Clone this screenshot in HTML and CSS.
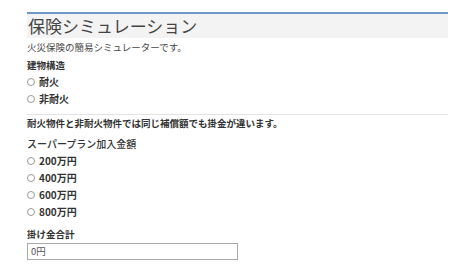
FILE: index.html
```html
<!DOCTYPE html>
<html lang="ja">
<head>
<meta charset="utf-8">
<link rel="stylesheet" href="styles.css">
</head>
<body>
<div class="page">
  <h1 class="title">保険シミュレーション</h1>
  <p class="lead">火災保険の簡易シミュレーターです。</p>
  <div class="label first">建物構造</div>
  <label class="opt"><span class="radio"></span>耐火</label>
  <label class="opt"><span class="radio"></span>非耐火</label>
  <div class="rule"></div>
  <p class="note">耐火物件と非耐火物件では同じ補償額でも掛金が違います。</p>
  <div class="label medium">スーパープラン加入金額</div>
  <label class="opt"><span class="radio"></span>200万円</label>
  <label class="opt"><span class="radio"></span>400万円</label>
  <label class="opt"><span class="radio"></span>600万円</label>
  <label class="opt"><span class="radio"></span>800万円</label>
  <div class="label total">掛け金合計</div>
  <div class="field">0円</div>
</div>
</body>
</html>
```
FILE: styles.css
```css
html, body {
  margin: 0;
  padding: 0;
  background: #fff;
}
body {
  font-family: "Noto Sans CJK JP", "Noto Sans", sans-serif;
  color: #333;
}
.page {
  width: 421px;
  margin-left: 27px;
  padding-top: 12px;
}
.title {
  margin: 0;
  border-top: 2px solid #6d98c3;
  background: #f3f3f3;
  font-size: 17px;
  font-weight: normal;
  color: #444;
  height: 24px;
  line-height: 24px;
  padding-left: 1px;
}
.lead {
  margin: 2px 0 0 0;
  font-size: 9.5px;
  line-height: 14px;
  color: #444;
}
.label {
  font-size: 9.5px;
  font-weight: bold;
  line-height: 16px;
  color: #333;
}
.label.first {
  margin-top: 3px;
}
.opt {
  display: flex;
  align-items: center;
  height: 17px;
  font-size: 10px;
  font-weight: bold;
  color: #333;
}
.radio {
  width: 6px;
  height: 6px;
  border: 1px solid #999;
  border-radius: 50%;
  margin-right: 4px;
  flex: none;
}
.rule {
  margin-top: 7px;
  height: 1px;
  background: #e3e3e3;
}
.note {
  margin: 1px 0 0 0;
  font-size: 9.5px;
  font-weight: bold;
  line-height: 14px;
  color: #333;
}
.label.medium {
  margin-top: 6px;
  font-size: 10px;
  font-weight: 500;
}
.label.total {
  margin-top: 6px;
}
.field {
  margin-top: 1px;
  width: 203px;
  height: 15px;
  border: 1px solid #aaa;
  padding: 0 3px;
  font-size: 9.5px;
  line-height: 15px;
  color: #555;
}
```
